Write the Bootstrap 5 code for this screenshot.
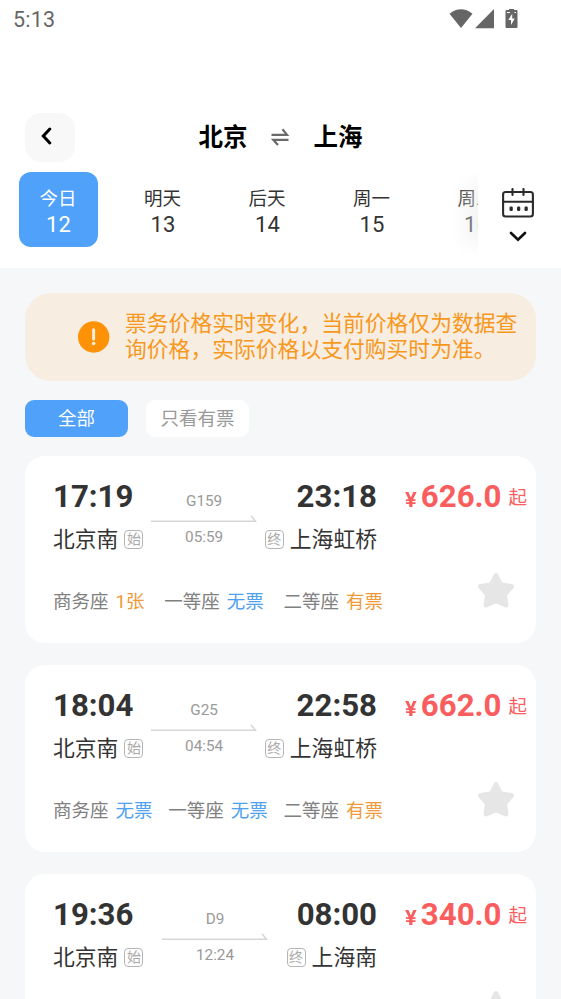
<!DOCTYPE html>
<html lang="zh-CN">
<head>
<meta charset="utf-8">
<meta name="viewport" content="width=device-width, initial-scale=1">
<title>北京 - 上海</title>
<link href="https://cdn.jsdelivr.net/npm/bootstrap@5.3.0/dist/css/bootstrap.min.css" rel="stylesheet">
<style>
body{font-family:Roboto,"Noto Sans CJK SC",sans-serif;background:#f5f7f9;color:#333;width:561px;height:999px;overflow:hidden}
svg{display:block;flex:none}
.top-area{height:268px;background:#fff}
.status{height:40px;padding:0 43px 2px 13px;color:#666;font-size:21.5px;letter-spacing:.2px}
.status span{padding-top:2px}
.title-row{height:50px;margin-top:72px;padding:1px 25px 0}
.back{width:50px;height:49px;border-radius:16px;background:#f8f8f8;padding:0 0 3px 15px}
.cities{font-size:24.5px;font-weight:700;color:#000;margin-left:123.500px;gap:23px;padding-top:2px}
.cities svg{margin-bottom:3px}
.dates{height:96px;margin-top:10px;padding-left:7px}
.days{width:471px;height:96px;position:relative}
.day{flex:0 0 104.5px;height:75px}
.day>div{width:79px;height:75px;border-radius:12px;padding:14px 1px 0 0;text-align:center;font-size:18.5px;line-height:26px}
.day .num{font-size:22px;line-height:26px;letter-spacing:.2px;padding-left:1px}
.day.on>div{background:#50a1f9;color:#fff}
.fade-edge{position:absolute;right:0;top:0;width:26px;height:84px;background:linear-gradient(90deg,rgba(255,255,255,0),rgba(235,235,235,.55));-webkit-mask-image:linear-gradient(transparent,#000 30%,#000 70%,transparent)}
.pick{width:80px;padding-top:16px;gap:13px}
.notice{margin:25px 25px 0;height:88px;border-radius:26px;background:#f7ede1;color:#f7981d;padding:0 0 0 53px;gap:15px;font-size:21.8px;line-height:26px}
.filters{margin:19px 25px 0;gap:18px}
.chip{width:103px;height:37px;border-radius:9px;background:#fff;color:#999;font-size:18.5px;line-height:38px;text-align:center}
.chip.on{background:#50a1f9;color:#fff}
.train{margin:19px 25px 0;height:187px;border-radius:20px;background:#fff;padding:22px 9px 0 28px}
.train+.train{margin-top:22px}
.trip{width:324px}
.time{font-size:31.2px;font-weight:700;line-height:37px}
.station{font-size:21.8px;line-height:37px;margin-top:6px;gap:6px}
.tag{width:19px;height:19px;border:1px solid #b5b5b5;border-radius:4px;color:#aaa;font-size:14px;line-height:17px;text-align:center}
.via{width:106px;padding-top:12px;text-align:center;color:#999;font-size:15.3px;line-height:22px}
.via svg{margin:3px 0 3px}
.price{color:#fa5d5d;line-height:37px;font-size:31.2px;font-weight:700}
.price .yen{font-size:19.500px;width:16px;transform:scaleX(1.12);transform-origin:left}
.price .from{font-size:18.5px;font-weight:400;margin-left:7px;align-self:flex-start;padding-top:2px}
.seats{width:330px;height:28px;font-size:18.5px;color:#808080;margin-top:31px}
.seats b{font-weight:400;color:#f0993a;margin-left:7px}
.seats b.none{color:#50a1f0}
.star{margin:-2px 12.500px 0 0}
</style>
<script src="https://cdn.jsdelivr.net/npm/bootstrap@5.3.0/dist/js/bootstrap.bundle.min.js"></script>
</head>
<body>
<svg width="0" height="0" class="position-absolute">
<symbol id="arrow" viewBox="0 0 106 8"><path d="M0 6.3H104.500L100 .8" fill="none" stroke="#d6d6d6" stroke-width="1.5"/></symbol>
<symbol id="star" viewBox="0 0 38 36"><path d="M19 3.500L23.500 12.800L34.500 14.500L27.500 22.500L29 33L19 28.700L9 33L10.500 22.500L3.500 14.500L14.500 12.800Z" fill="#e6e6e6" stroke="#e6e6e6" stroke-width="5" stroke-linejoin="round"/></symbol>
</svg>
<header class="top-area">
  <div class="status d-flex justify-content-between align-items-center">
    <span>5:13</span>
    <svg width="69" height="20" viewBox="0 0 69 20" fill="#666"><path d="M.500 4.700Q12-4.200 23.500 4.700L12 19Z"/><path d="M45 0V19.200H26Z"/><path fill-rule="evenodd" d="M60-.8H65V1H67.500Q68.500 1 68.500 2V18Q68.500 19 67.500 19H57.500Q56.500 19 56.500 18V2Q56.500 1 57.500 1H60ZM63.200 4.800L59.300 11H62V16L65.700 9.500H63.200ZM58 3H61V4H58ZM65.500 3H67V4H65.500Z"/></svg>
  </div>
  <div class="title-row d-flex align-items-center">
    <div class="back d-flex align-items-center"><svg width="14" height="18" viewBox="0 0 14 18"><path d="M9.800 2L3.300 9L9.800 16" fill="none" stroke="#000" stroke-width="3" stroke-linecap="round"/></svg></div>
    <div class="cities d-flex align-items-center"><span>北京</span>
      <svg width="20" height="18" viewBox="0 0 20 18"><path d="M.500 6.800H16L11.500 1.300M17.500 11.800H2.300L7 17" fill="none" stroke="#6a6a6a" stroke-width="2.200"/></svg>
      <span>上海</span></div>
  </div>
  <div class="dates d-flex">
    <div class="days d-flex overflow-hidden ps-1">
      <div class="day on ps-2"><div>今日<div class="num">12</div></div></div>
      <div class="day ps-2"><div>明天<div class="num">13</div></div></div>
      <div class="day ps-2"><div>后天<div class="num">14</div></div></div>
      <div class="day ps-2"><div>周一<div class="num">15</div></div></div>
      <div class="day ps-2"><div>周二<div class="num">16</div></div></div>
      <div class="fade-edge"></div>
    </div>
    <div class="pick d-flex flex-column align-items-center">
      <svg width="32" height="30" viewBox="0 0 32 30"><g fill="none" stroke="#2b2b2b" stroke-width="2.100" stroke-linecap="round"><rect x="1.100" y="4" width="29.800" height="24.500" rx="2.500"/><path d="M1 13.700H31M10.500 1V7M21.500 1V7"/></g><g fill="#2b2b2b"><rect x="7.500" y="18.500" width="3.300" height="4.500" rx="1.200"/><rect x="15" y="18.500" width="3.300" height="4.500" rx="1.200"/><rect x="22.500" y="18.500" width="3.300" height="4.500" rx="1.200"/></g></svg>
      <svg width="18" height="12" viewBox="0 0 18 12"><path d="M2 2L9 8.700L16 2" fill="none" stroke="#111" stroke-width="2.700" stroke-linecap="round"/></svg>
    </div>
  </div>
</header>
<main>
  <div class="notice d-flex align-items-center">
    <svg width="32" height="32" viewBox="0 0 32 32"><circle cx="15.700" cy="16" r="15.700" fill="#fd9206"/><path d="M15.600 8.700V18" stroke="#fbeedd" stroke-width="3" stroke-linecap="round"/><circle cx="15.600" cy="22.500" r="1.800" fill="#fbeedd"/></svg>
    <div>票务价格实时变化，当前价格仅为数据查<br>询价格，实际价格以支付购买时为准。</div>
  </div>
  <div class="filters d-flex"><div class="chip on">全部</div><div class="chip">只看有票</div></div>

  <section class="train">
    <div class="d-flex justify-content-between">
      <div class="trip d-flex justify-content-between">
        <div><div class="time">17:19</div><div class="station d-flex align-items-center">北京南<span class="tag">始</span></div></div>
        <div class="via">G159<svg width="106" height="8"><use href="#arrow"/></svg>05:59</div>
        <div><div class="time text-end">23:18</div><div class="station d-flex align-items-center"><span class="tag">终</span>上海虹桥</div></div>
      </div>
      <div class="price d-flex align-items-baseline"><span class="yen">¥</span>626.0<span class="from">起</span></div>
    </div>
    <div class="d-flex justify-content-between">
      <div class="seats d-flex justify-content-between align-items-center"><span>商务座<b>1张</b></span><span>一等座<b class="none">无票</b></span><span>二等座<b>有票</b></span></div>
      <div class="star pt-3"><svg width="38" height="36"><use href="#star"/></svg></div>
    </div>
  </section>

  <section class="train">
    <div class="d-flex justify-content-between">
      <div class="trip d-flex justify-content-between">
        <div><div class="time">18:04</div><div class="station d-flex align-items-center">北京南<span class="tag">始</span></div></div>
        <div class="via">G25<svg width="106" height="8"><use href="#arrow"/></svg>04:54</div>
        <div><div class="time text-end">22:58</div><div class="station d-flex align-items-center"><span class="tag">终</span>上海虹桥</div></div>
      </div>
      <div class="price d-flex align-items-baseline"><span class="yen">¥</span>662.0<span class="from">起</span></div>
    </div>
    <div class="d-flex justify-content-between">
      <div class="seats d-flex justify-content-between align-items-center"><span>商务座<b class="none">无票</b></span><span>一等座<b class="none">无票</b></span><span>二等座<b>有票</b></span></div>
      <div class="star pt-3"><svg width="38" height="36"><use href="#star"/></svg></div>
    </div>
  </section>

  <section class="train">
    <div class="d-flex justify-content-between">
      <div class="trip d-flex justify-content-between">
        <div><div class="time">19:36</div><div class="station d-flex align-items-center">北京南<span class="tag">始</span></div></div>
        <div class="via">D9<svg width="106" height="8"><use href="#arrow"/></svg>12:24</div>
        <div><div class="time text-end">08:00</div><div class="station d-flex align-items-center"><span class="tag">终</span>上海南</div></div>
      </div>
      <div class="price d-flex align-items-baseline"><span class="yen">¥</span>340.0<span class="from">起</span></div>
    </div>
    <div class="d-flex justify-content-end">
      <div class="star pt-3"><svg width="38" height="36"><use href="#star"/></svg></div>
    </div>
  </section>
</main>
</body>
</html>
